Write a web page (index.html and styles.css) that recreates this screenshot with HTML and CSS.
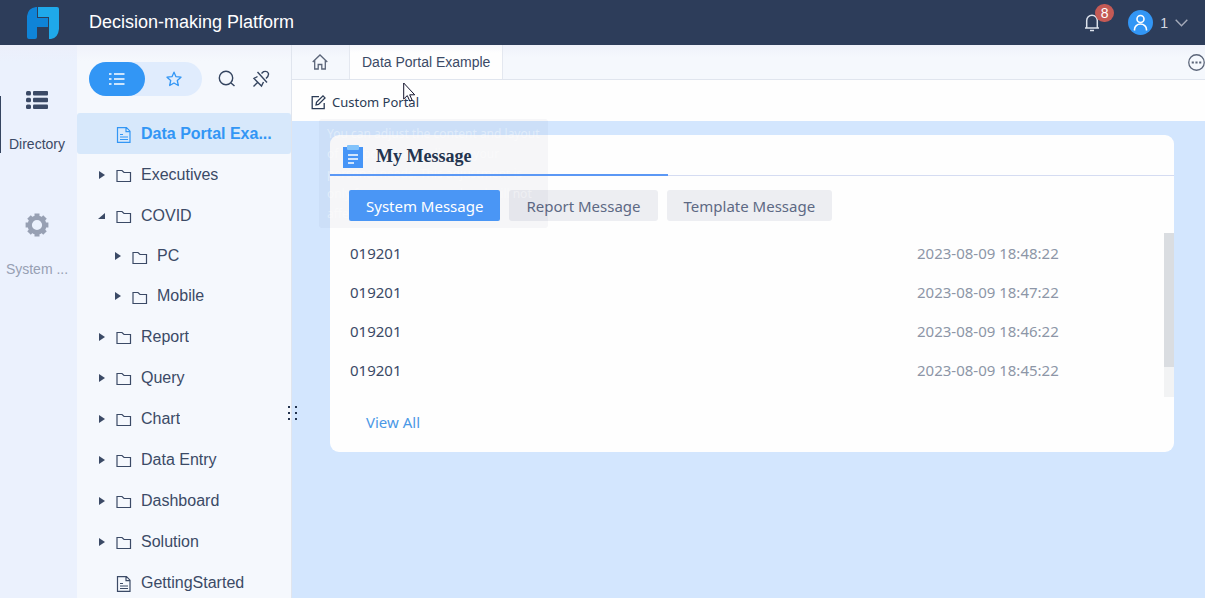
FILE: index.html
```html
<!DOCTYPE html>
<html lang="en">
<head>
<meta charset="utf-8">
<title>Decision-making Platform</title>
<link rel="stylesheet" href="styles.css">
</head>
<body>
<svg class="defs" width="0" height="0" aria-hidden="true">
  <symbol id="folder" viewBox="0 0 16 16"><path d="M1 13.500V2.500h5l2 2h6.500v9z" fill="none" stroke="currentColor" stroke-width="1.200"/></symbol>
  <symbol id="doc" viewBox="0 0 16 16"><path d="M1.500 .7h9l3.500 3.500v11.100h-12.500zM10 1v3.700h4M4 7.500h3M4 10h8M4 12.500h8" fill="none" stroke="currentColor" stroke-width="1.200"/></symbol>
  <symbol id="closed" viewBox="0 0 8 8"><path d="M1 0v8l6-4z" fill="currentColor"/></symbol>
  <symbol id="open" viewBox="0 0 8 8"><path d="M7 1v6H0z" fill="currentColor"/></symbol>
</svg>
<header class="header">
  <svg class="logo" viewBox="0 0 32 32" aria-hidden="true">
    <path d="M9 0h1v11h11v9H10v10q0 2-2 2H2q-2 0-2-2V9Q1 1 9 0z" fill="#0f84d8"/>
    <path d="M11 0h19q2 0 2 2v20q-1 9-8 10h-2V10H11z" fill="#1fa9ea"/>
  </svg>
  <h1 class="title">Decision-making Platform</h1>
  <button class="bell" aria-label="Notifications">
    <svg width="16" height="18" viewBox="0 0 16 18"><path d="M1 14h14M2.700 14V6.500a5.300 5.300 0 0 1 10.600 0V14M6 16.500h4" fill="none" stroke="#dce2ec" stroke-width="1.500"/></svg>
    <span class="badge">8</span>
  </button>
  <button class="user">
    <svg width="25" height="25" viewBox="0 0 25 25"><circle cx="12.500" cy="12.500" r="12.500" fill="#3296f5"/><circle cx="12.500" cy="9" r="3.500" fill="none" stroke="#fff" stroke-width="1.600"/><path d="M6.500 20.500v-1a6 5.500 0 0 1 12 0v1" fill="none" stroke="#fff" stroke-width="1.600"/></svg>
    <span>1</span>
    <svg width="13" height="8" viewBox="0 0 13 8"><path d="M.7.8l5.800 6 5.800-6" fill="none" stroke="#a5abba" stroke-width="1.400"/></svg>
  </button>
</header>
<div class="shell">
  <nav class="rail">
    <button class="rail-item current">
      <svg width="22" height="18" viewBox="0 0 22 18" fill="currentColor"><rect width="5" height="4.600" rx="1.500"/><rect x="7" width="15" height="4.600" rx="1"/><rect y="6.700" width="5" height="4.600" rx="1.500"/><rect x="7" y="6.700" width="15" height="4.600" rx="1"/><rect y="13.400" width="5" height="4.600" rx="1.500"/><rect x="7" y="13.400" width="15" height="4.600" rx="1"/></svg>
      <span>Directory</span>
    </button>
    <button class="rail-item">
      <svg width="24" height="24" viewBox="0 0 24 24"><circle cx="12" cy="12" r="7.300" fill="none" stroke="currentColor" stroke-width="4.400"/><g stroke="currentColor" stroke-width="5"><path d="M12 .6v3M12 20.400v3M.6 12h3M20.400 12h3M4 4l2 2M18 18l2 2M4 20l2-2M18 6l2-2"/></g></svg>
      <span>System ...</span>
    </button>
  </nav>
  <aside class="panel">
    <div class="tools">
      <div class="switch">
        <button class="seg on" aria-label="List"><svg width="16" height="14" viewBox="0 0 16 14"><path d="M0 2h2.500M5 2h10.500M0 7h2.500M5 7h10.500M0 12h2.500M5 12h10.500" stroke="#fff" stroke-width="1.700"/></svg></button>
        <button class="seg" aria-label="Favourites"><svg width="16" height="16" viewBox="0 0 16 16"><path d="M8 1.200l2 4.500 5 .5-3.700 3.300 1 5L8 12l-4.300 2.500 1-5L1 6.200l5-.5z" fill="none" stroke="#3296f5" stroke-width="1.300" stroke-linejoin="round"/></svg></button>
      </div>
      <button class="tool" aria-label="Search"><svg width="18" height="18" viewBox="0 0 18 18"><circle cx="8" cy="8" r="6.700" fill="none" stroke="#354560" stroke-width="1.400"/><path d="M13 13l3.500 3" stroke="#354560" stroke-width="1.500"/></svg></button>
      <button class="tool" aria-label="Unpin"><svg width="18" height="18" viewBox="0 0 18 18"><path d="M5.500 2l9.500 10.500M1.500 16.500l4-4M5.500 6.500L2 8.500l7.500 7.500 2-4M9.500 3.500l2-1.800q3.500-1 4.700 1.300t-2.200 5.500" fill="none" stroke="#354560" stroke-width="1.400"/></svg></button>
    </div>
    <ul class="tree">
      <li><a class="node selected" href="#"><span class="arrow"></span><svg class="icon"><use href="#doc"/></svg><span class="label">Data Portal Exa...</span></a></li>
      <li><a class="node" href="#"><svg class="arrow"><use href="#closed"/></svg><svg class="icon"><use href="#folder"/></svg><span class="label">Executives</span></a></li>
      <li><a class="node" href="#"><svg class="arrow"><use href="#open"/></svg><svg class="icon"><use href="#folder"/></svg><span class="label">COVID</span></a>
        <ul class="branch">
          <li><a class="node" href="#"><svg class="arrow"><use href="#closed"/></svg><svg class="icon"><use href="#folder"/></svg><span class="label">PC</span></a></li>
          <li><a class="node" href="#"><svg class="arrow"><use href="#closed"/></svg><svg class="icon"><use href="#folder"/></svg><span class="label">Mobile</span></a></li>
        </ul>
      </li>
      <li><a class="node" href="#"><svg class="arrow"><use href="#closed"/></svg><svg class="icon"><use href="#folder"/></svg><span class="label">Report</span></a></li>
      <li><a class="node" href="#"><svg class="arrow"><use href="#closed"/></svg><svg class="icon"><use href="#folder"/></svg><span class="label">Query</span></a></li>
      <li><a class="node" href="#"><svg class="arrow"><use href="#closed"/></svg><svg class="icon"><use href="#folder"/></svg><span class="label">Chart</span></a></li>
      <li><a class="node" href="#"><svg class="arrow"><use href="#closed"/></svg><svg class="icon"><use href="#folder"/></svg><span class="label">Data Entry</span></a></li>
      <li><a class="node" href="#"><svg class="arrow"><use href="#closed"/></svg><svg class="icon"><use href="#folder"/></svg><span class="label">Dashboard</span></a></li>
      <li><a class="node" href="#"><svg class="arrow"><use href="#closed"/></svg><svg class="icon"><use href="#folder"/></svg><span class="label">Solution</span></a></li>
      <li><a class="node" href="#"><span class="arrow"></span><svg class="icon"><use href="#doc"/></svg><span class="label">GettingStarted</span></a></li>
    </ul>
  </aside>
  <main class="main">
    <svg class="grip" width="12" height="16" viewBox="0 0 12 16" aria-hidden="true"><path d="M1 2h2M8 2h2M1 8h2M8 8h2M1 14h2M8 14h2" stroke="#24344f" stroke-width="2"/></svg>
    <div class="tabs">
      <button class="home" aria-label="Home"><svg width="16" height="16" viewBox="0 0 16 16"><path d="M.7 8L8 1l7.300 7M2.700 6.500V15h3.500v-4.500h3.600V15h3.500V6.500" fill="none" stroke="#5b6579" stroke-width="1.300"/></svg></button>
      <button class="tab">Data Portal Example</button>
      <button class="more" aria-label="More"><svg width="17" height="17" viewBox="0 0 16 16"><circle cx="8" cy="8" r="7.300" fill="none" stroke="#5b6579" stroke-width="1.200"/><path d="M3.500 8h2M7 8h2M10.500 8h2" stroke="#5b6579" stroke-width="1.700"/></svg></button>
    </div>
    <div class="toolbar">
      <button class="custom"><svg width="15" height="15" viewBox="0 0 15 15"><path d="M8 1.700H1.200v12h12V8M5 10l.5-2.700L12 .9l2 2-6.500 6.500z" fill="none" stroke="#2b3b55" stroke-width="1.300"/></svg>Custom Portal</button>
      <div class="tip" role="tooltip">You can adjust the content and layout of the portal according to your personal needs. This adjustment is only for your own portal and will not affect other users.</div>
      <svg class="cursor" width="13" height="20" viewBox="0 0 13 20" aria-hidden="true"><path d="M.7 1v16l3.600-3.400 2.500 5.500 2.300-1-2.400-5.300h5z" fill="#fff" stroke="#14142d"/></svg>
    </div>
    <div class="content">
      <section class="card">
        <div class="card-head">
          <div class="card-title">
            <svg width="20" height="23" viewBox="0 0 20 23" aria-hidden="true"><path d="M0 2h20v21H0z" fill="#4695f7"/><rect x="4" width="12" height="5" rx="1" fill="#82c3fb"/><path d="M5 10h10M5 14h10M5 18h6" stroke="#fff" stroke-width="1.600"/></svg>
            <h2>My Message</h2>
          </div>
        </div>
        <div class="filters">
          <button class="filter active">System Message</button>
          <button class="filter">Report Message</button>
          <button class="filter">Template Message</button>
        </div>
        <div class="scroller">
          <table class="messages">
            <tr><td>019201</td><td class="time">2023-08-09 18:48:22</td></tr>
            <tr><td>019201</td><td class="time">2023-08-09 18:47:22</td></tr>
            <tr><td>019201</td><td class="time">2023-08-09 18:46:22</td></tr>
            <tr><td>019201</td><td class="time">2023-08-09 18:45:22</td></tr>
          </table>
          <div class="track"><div class="thumb"></div></div>
        </div>
        <a class="all" href="#">View All</a>
      </section>
    </div>
  </main>
</div>
</body>
</html>
```
FILE: styles.css
```css
* { box-sizing: border-box; }
body { margin: 0; height: 100vh; display: flex; flex-direction: column; overflow: hidden; font-family: "Liberation Sans", Arial, sans-serif; color: #3b4a66; }
button { border: 0; padding: 0; background: none; font: inherit; color: inherit; }
ul { list-style: none; margin: 0; padding: 0; }
a { text-decoration: none; color: inherit; }
svg { flex: none; }
.defs { position: absolute; }
.header { height: 45px; flex: none; display: flex; align-items: center; padding: 0 17px 0 27px; background: #2d3d5a; color: #fff; }
.logo { width: 32px; height: 32px; margin-right: 30px; }
.title { margin: 0; flex: 1; font-size: 18px; font-weight: 400; }
.bell { position: relative; display: flex; margin-right: 28px; }
.badge { position: absolute; left: 11px; top: -10px; width: 19px; height: 18px; border-radius: 9px; background: #c45a55; font-size: 14px; line-height: 18px; }
.user { display: flex; align-items: center; gap: 7px; font-size: 14px; color: #d5d9e2; }
.shell { flex: 1; min-height: 0; display: flex; }
.rail { width: 77px; flex: none; background: linear-gradient(#eceffb, #ebf1fd 16px); padding-top: 29px; }
.rail-item { width: 100%; height: 125px; display: flex; flex-direction: column; align-items: center; font-size: 14px; color: #97a0b3; padding: 14px 3px 0 0; }
.rail-item svg { height: 24px; margin-bottom: 24px; }
.rail-item.current { color: #3b4a66; background: linear-gradient(#354560, #354560) 0 22px / 1px 57px no-repeat; }
.panel { width: 215px; flex: none; border-right: 1px solid #e0e5ee; background: linear-gradient(#f0f2fb, #f5f8fd 16px); }
.tools { display: flex; align-items: center; padding: 17px 12px; }
.switch { display: flex; border-radius: 17px; background: #e0ecfd; margin-right: 16px; }
.seg { width: 56px; height: 34px; border-radius: 17px; display: grid; place-items: center; }
.seg.on { background: #3296f5; }
.seg:last-child { width: 57px; }
.tool { display: flex; margin-right: 16px; }
.tool:last-child { margin-right: 0; }
.node { height: 41px; display: flex; align-items: center; padding: 0 12px 0 21px; font-size: 16px; }
.branch .node { height: 40px; padding-left: 37px; }
.arrow { width: 8px; height: 8px; margin-right: 10px; flex: none; }
.icon { width: 16px; height: 16px; margin: 3px 9px 0 0; }
.label { overflow: hidden; text-overflow: ellipsis; white-space: nowrap; }
.selected { background: #d7e8fb; border-radius: 3px; color: #3296f5; font-weight: 700; }
.main { position: relative; flex: 1; min-width: 0; display: flex; flex-direction: column; background: #d3e6fe; }
.grip { position: absolute; left: -5px; top: 360px; }
.tabs { height: 35px; flex: none; display: flex; border-bottom: 1px solid #e0e5ee; background: linear-gradient(#eff1fa, #f5f8fd 12px); }
.home { width: 57px; padding-right: 2px; display: grid; place-items: center; }
.tab { padding: 0 12px; border: solid #e4e8f0; border-width: 0 1px; background: linear-gradient(#f6f7fc, #fefefe 8px); font-size: 14px; }
.more { margin-left: auto; display: flex; align-items: center; }
.toolbar { position: relative; height: 41px; flex: none; padding: 3px 19px 0; display: flex; align-items: center; background: #fefefe; font-family: "Noto Sans", sans-serif; font-size: 13px; }
.custom { display: flex; align-items: center; gap: 6px; color: #2b3b55; }
.tip { position: absolute; z-index: 2; left: 27px; top: 39px; width: 229px; padding: 5px 8px 4px; border-radius: 3px; background: rgba(45, 61, 90, .04); color: rgba(255, 255, 255, .4); font-size: 12px; line-height: 20px; }
.cursor { position: absolute; z-index: 3; left: 111px; top: 2px; }
.content { padding: 14px 31px 14px 38px; font-family: "Noto Sans", sans-serif; }
.card { background: #fefefe; border-radius: 9px; padding-bottom: 18px; }
.card-head { border-bottom: 1px solid #d5dcf2; height: 41px; }
.card-title { position: relative; z-index: 3; width: 40%; height: 41px; display: flex; align-items: center; gap: 13px; padding: 4px 0 0 13px; border-bottom: 2px solid #5b98f5; }
h2 { margin: 0; font: 700 18px "Liberation Serif", serif; color: #24344f; }
.filters { display: flex; gap: 9px; padding: 14px 19px 12px; }
.filter { height: 31px; padding: 1px 17px 0; border-radius: 3px; background: #edeef2; color: #5d6984; font-size: 15px; }
.filter.active { position: relative; z-index: 3; background: rgba(67, 146, 245, .96); color: #fff; border-radius: 2px; }
.scroller { display: flex; height: 164px; }
.messages { flex: 1; border-collapse: collapse; font-size: 15px; align-self: flex-start; }
.messages td { height: 39px; padding: 0 0 0 20px; }
.messages .time { width: 247px; padding: 0; color: #8d96a7; }
.track { width: 10px; background: #f2f3f4; }
.thumb { height: 82%; background: #dadde1; }
.all { display: inline-block; margin: 14px 36px 0; font-size: 15px; line-height: 23px; color: #4a98e6; }
```
